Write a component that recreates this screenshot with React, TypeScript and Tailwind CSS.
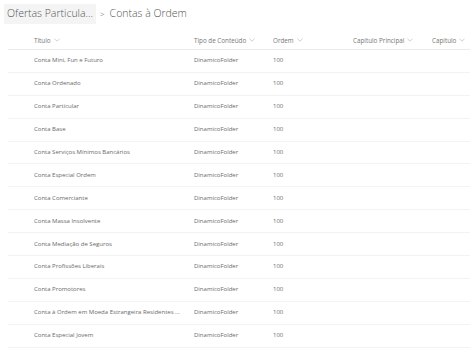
import React from "react";

const rows = [
  "Conta Mini, Fun e Futuro",
  "Conta Ordenado",
  "Conta Particular",
  "Conta Base",
  "Conta Serviços Mínimos Bancários",
  "Conta Especial Ordem",
  "Conta Comerciante",
  "Conta Massa Insolvente",
  "Conta Mediação de Seguros",
  "Conta Profissões Liberais",
  "Conta Promotores",
  "Conta à Ordem em Moeda Estrangeira Residentes ...",
  "Conta Especial Jovem",
];

function Chev() {
  return (
    <svg width="6" height="4" viewBox="0 0 6 4" className="ml-[3px] inline-block">
      <path d="M0.5 0.8 L3 3.2 L5.5 0.8" fill="none" stroke="#b0b0b0" strokeWidth="0.6" />
    </svg>
  );
}

export default function App() {
  return (
    <div
      className="w-[474px] h-[350px] overflow-hidden bg-white text-[#555]"
      style={{ fontFamily: '"Open Sans", "Noto Sans", sans-serif' }}
    >
      <div className="flex items-center h-[28px] pl-[4px] pb-[1px]">
        <span className="bg-[#f4f4f4] px-[3px] h-[20px] flex items-center text-[10.5px] font-light text-[#555]">
          Ofertas Particula...
        </span>
        <span className="ml-[4px] mr-[5px] text-[8px] text-[#999]">&gt;</span>
        <span className="text-[10.5px] font-light text-[#555]">Contas à Ordem</span>
      </div>
      <div className="mx-[8px] w-[462px]">
        <div className="flex items-end pb-[4px] h-[22px] border-b border-[#eaeaea] text-[6.3px] text-[#777]">
          <div className="w-[186px] pl-[26px] flex items-center">Título<Chev /></div>
          <div className="w-[79px] flex items-center">Tipo de Conteúdo<Chev /></div>
          <div className="w-[80px] flex items-center">Ordem<Chev /></div>
          <div className="w-[79px] flex items-center">Capítulo Principal<Chev /></div>
          <div className="flex-1 flex items-center">Capítulo<Chev /></div>
        </div>
        {rows.map((r) => (
          <div key={r} className="flex items-center h-[22.9px] border-b border-[#f3f3f3] text-[6px] text-[#6a6a6a]">
            <div className="w-[186px] pl-[26px] truncate">{r}</div>
            <div className="w-[79px]">DinamicoFolder</div>
            <div className="w-[80px]">100</div>
            <div className="w-[79px]"></div>
            <div className="flex-1"></div>
          </div>
        ))}
      </div>
    </div>
  );
}
